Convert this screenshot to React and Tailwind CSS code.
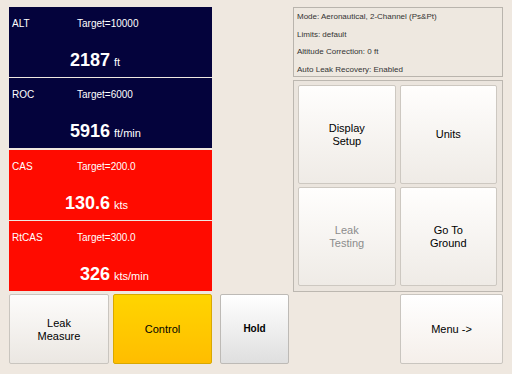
const readings = [
    { label: 'ALT', target: 'Target=10000', value: '2187', unit: 'ft', bg: 'bg-[#04033c]', gap: '' },
    { label: 'ROC', target: 'Target=6000', value: '5916', unit: 'ft/min', bg: 'bg-[#04033c]', gap: 'mt-px' },
    { label: 'CAS', target: 'Target=200.0', value: '130.6', unit: 'kts', bg: 'bg-[#ff0b00]', gap: 'mt-[2px]' },
    { label: 'RtCAS', target: 'Target=300.0', value: '326', unit: 'kts/min', bg: 'bg-[#ff0b00]', gap: 'mt-px' },
];

const statusLines = [
    'Mode: Aeronautical, 2-Channel (Ps&Pt)',
    'Limits: default',
    'Altitude Correction: 0 ft',
    'Auto Leak Recovery: Enabled',
];

function Reading({ r }) {
    return (
        <div className={`h-[70px] ${r.bg} ${r.gap} text-white flex flex-col`}>
            <div className="flex pt-[11px] pl-[3px] text-[10px] leading-[12px]">
                <span className="w-[65px]">{r.label}</span>
                <span>{r.target}</span>
            </div>
            <div className="flex items-baseline mt-[19px]">
                <span className="w-[101px] text-right text-[18px] leading-[22px] font-bold">{r.value}</span>
                <span className="ml-[4px] text-[11px]">{r.unit}</span>
            </div>
        </div>
    );
}

function GridButton({ lines, muted }) {
    return (
        <div className={`flex flex-col items-center justify-center rounded-[2px] border border-[#cdc8c1] bg-gradient-to-b from-[#fffefd] to-[#efebe6] text-[11px] leading-[13px] ${muted ? 'text-[#8c8c8c]' : 'text-black'}`}>
            {lines.map((l) => <span key={l}>{l}</span>)}
        </div>
    );
}

export default function App() {
    return (
        <div className="w-[512px] h-[374px] bg-[#efe8e0] pt-[7px] pl-[9px] font-['Liberation_Sans',Arial,sans-serif] overflow-hidden">
            <div className="flex">
                {/* Readings */}
                <div className="w-[203px] flex flex-col">
                    {readings.map((r) => <Reading key={r.label} r={r} />)}
                </div>

                {/* Status + menu grid */}
                <div className="ml-[81px] w-[210px] flex flex-col">
                    <div className="h-[70px] border border-[#b9b4ad] bg-[#eee8e0] pl-[3px] text-[8px] leading-[17.6px] text-[#333]">
                        {statusLines.map((s) => <div key={s}>{s}</div>)}
                    </div>
                    <div className="mt-[3px] h-[212px] border border-[#bcb7b0] bg-[#ebe5de] pt-[4px] pl-[4px] pr-[5px] pb-[5px] grid grid-cols-2 grid-rows-2 gap-x-[4px] gap-y-[3px]">
                        <GridButton lines={['Display', 'Setup']} />
                        <GridButton lines={['Units']} />
                        <GridButton lines={['Leak', 'Testing']} muted />
                        <GridButton lines={['Go To', 'Ground']} />
                    </div>
                </div>
            </div>

            {/* Bottom buttons */}
            <div className="flex mt-[2px] h-[70px] text-[11px] leading-[12.5px] text-black">
                <div className="w-[100px] flex flex-col items-center justify-center border border-[#c9c5bf] rounded-[2px] bg-gradient-to-b from-[#fdfcfb] to-[#ebe7e2] pt-px">
                    <span>Leak</span>
                    <span>Measure</span>
                </div>
                <div className="ml-[4px] w-[99px] flex items-center justify-center border border-[#d9a800] rounded-[2px] bg-gradient-to-b from-[#ffd500] to-[#ffbd00]">
                    Control
                </div>
                <div className="ml-[8px] w-[69px] flex items-center justify-center border border-[#bdbab6] rounded-[2px] bg-gradient-to-b from-[#ffffff] to-[#dfdfdf] text-[10px] font-bold">
                    Hold
                </div>
                <div className="ml-[111px] w-[103px] flex items-center justify-center border border-[#c9c5bf] rounded-[2px] bg-gradient-to-b from-[#ffffff] to-[#f5efea]">
                    Menu -&gt;
                </div>
            </div>
        </div>
    );
}
